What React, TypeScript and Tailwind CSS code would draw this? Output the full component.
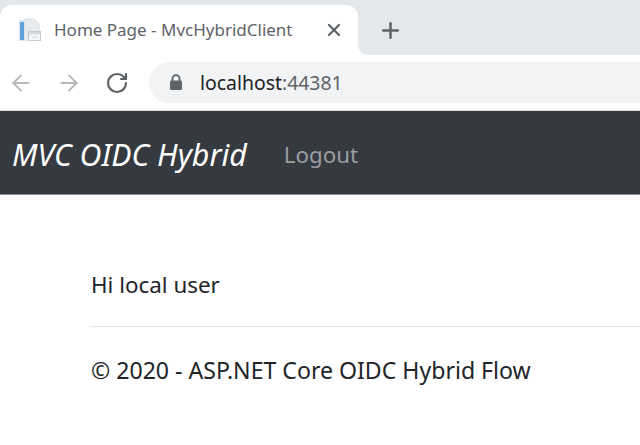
import { ArrowLeft, ArrowRight, RotateCw, X, Plus } from 'lucide-react';

function PageIcon() {
  return (
    <svg width="26" height="26" viewBox="0 0 26 26">
      <rect x="2" y="3" width="6" height="21" fill="#dfe6ee" />
      <rect x="3" y="5" width="4" height="18" fill="#5ea3dc" />
      <path d="M8 2h9l5 5v10H8z" fill="#e9ecef" stroke="#d8dbdf" strokeWidth="1" />
      <rect x="8" y="3" width="7" height="21" fill="#e8ebee" />
      <rect x="11.5" y="14.5" width="12" height="9" fill="#f6f7f8" stroke="#c9cdd1" strokeWidth="1" />
      <rect x="12" y="15" width="11" height="2.5" fill="#d5d8dc" />
      <rect x="15" y="19" width="6" height="2" fill="#e2e4e7" />
    </svg>
  );
}

function LockIcon() {
  return (
    <svg width="14" height="17" viewBox="0 0 14 17" fill="none">
      <path d="M3.5 7V4.6a3.5 3.5 0 0 1 7 0V7" stroke="#5f6368" strokeWidth="1.8" />
      <rect x="1" y="6.5" width="12" height="9.5" rx="1.5" fill="#5f6368" />
    </svg>
  );
}

export default function App() {
  return (
    <div className="w-[640px] h-[445px] overflow-hidden bg-white font-['Noto_Sans',sans-serif]">
      <div className="h-[55px] bg-white flex">
        <div className="w-[358px] bg-[#e5e8eb] pt-[5px]">
          <div className="h-[50px] bg-white rounded-t-[12px] flex items-center pl-[17px] pr-[14px]">
            <PageIcon />
            <span className="ml-[11px] text-[17px] text-[#5f6368] whitespace-nowrap flex-1">Home Page - MvcHybridClient</span>
            <X size={20} strokeWidth={2.6} className="text-[#5f6368]" />
          </div>
        </div>
        <div className="flex-1 bg-[#e5e8eb] rounded-bl-[10px] pl-[20px] pt-[18px]">
          <Plus size={25} strokeWidth={2.4} className="text-[#5f6368]" />
        </div>
      </div>

      <div className="h-[56px] flex items-center border-b border-[#e3e3e3] bg-white">
        <ArrowLeft size={26} strokeWidth={1.8} className="ml-[8px] text-[#b6b9bc]" />
        <ArrowRight size={26} strokeWidth={1.8} className="ml-[22px] text-[#b6b9bc]" />
        <RotateCw size={24} strokeWidth={2.2} className="ml-[23px] text-[#5f6368]" />
        <div className="ml-[20px] flex-1 h-[41px] bg-[#f1f3f4] rounded-l-full flex items-center pl-[20px]">
          <LockIcon />
          <span className="ml-[17px] text-[19.4px] text-[#202124]">
            localhost<span className="text-[#5f6368]">:44381</span>
          </span>
        </div>
      </div>

      <nav className="h-[84px] bg-[#343a40] border-b border-[#8a8d90] flex items-center pl-[12px] pt-[4px]">
        <span className="text-[30.3px] italic text-white whitespace-nowrap">MVC OIDC Hybrid</span>
        <span className="ml-[37px] text-[22.3px] text-[#9a9da0]">Logout</span>
      </nav>

      <main className="pl-[91px]">
        <p className="mt-[74px] text-[22.4px] leading-[32px] text-[#212529]">Hi local user</p>
        <hr className="mt-[25px] border-t border-[#e4e5e6]" />
        <p className="mt-[27px] text-[23.1px] leading-[32px] text-[#212529] whitespace-nowrap">© 2020 - ASP.NET Core OIDC Hybrid Flow</p>
      </main>
    </div>
  );
}
